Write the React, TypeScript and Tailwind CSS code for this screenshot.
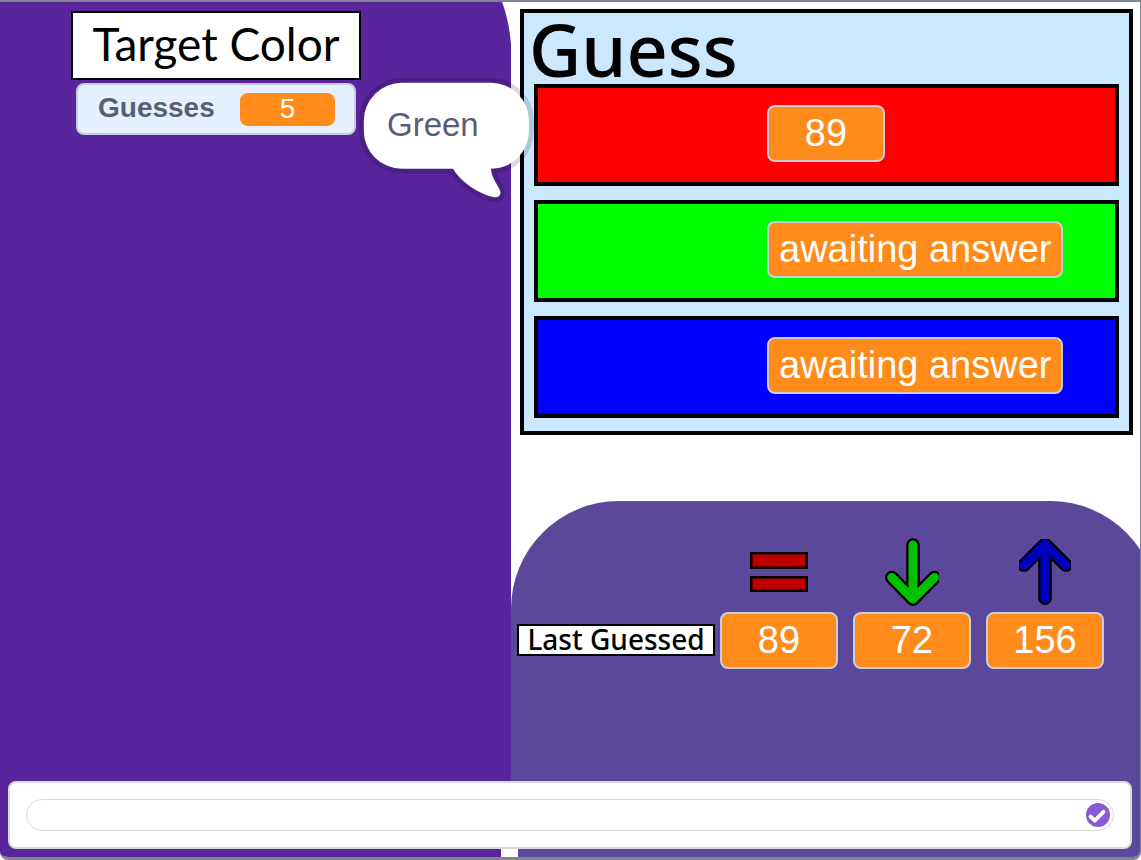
import type { FormEvent, ReactNode } from "react";
import { useState } from "react";

const sans = "font-['Liberation_Sans',Arial,sans-serif]";
const noto = "font-['Noto_Sans','Open_Sans',sans-serif]";

function Value({ children }: { children: ReactNode }) {
  return (
    <output
      className={`${sans} flex h-[57px] w-fit min-w-[118px] items-center justify-center rounded-lg border-2 border-[#c9cddb] bg-[#ff8c1a] px-[10px] pb-[2px] text-[38px] leading-none whitespace-nowrap text-white`}
    >
      {children}
    </output>
  );
}

function Equal() {
  return (
    <svg width="58" height="40" viewBox="0 0 58 40" aria-label="Correct" role="img">
      <g fill="#c00000" stroke="#000" strokeWidth="2.5">
        <rect x="1.25" y="1.25" width="55.5" height="14.5" />
        <rect x="1.25" y="25.25" width="55.5" height="13.5" />
      </g>
    </svg>
  );
}

function ArrowDown() {
  const d = "M28 7V61M6.8 39.5 28 61.2 49.5 39.5";
  return (
    <svg width="54" height="68" viewBox="0 0 54 68" fill="none" strokeLinecap="round" strokeLinejoin="round" aria-label="Lower" role="img">
      <path d={d} stroke="#000" strokeWidth="13.6" />
      <path d={d} stroke="#00c000" strokeWidth="9" />
    </svg>
  );
}

function ArrowUp() {
  const d = "M26 59.3V5.5M5 26.2 26 5.2 47 26.2";
  return (
    <svg width="52" height="66" viewBox="0 0 52 66" fill="none" strokeLinecap="round" strokeLinejoin="round" aria-label="Higher" role="img">
      <path d={d} stroke="#000" strokeWidth="13.6" />
      <path d={d} stroke="#0000c0" strokeWidth="9" />
    </svg>
  );
}

function Bubble() {
  return (
    <div className="absolute top-[76px] left-[359px] z-10 h-[126px] w-[176px]">
      <svg className="absolute inset-0" width="176" height="126" viewBox="-2 -2 74 53" aria-hidden="true">
        <path
          d="M16 36.2A16 16 0 0 1 0 20V16A16 16 0 0 1 16 0H53.5A16 16 0 0 1 69.5 16V20.2A16 16 0 0 1 53.5 36.2C53.5 40.2 57.5 44.2 57.5 46.2A2 2 0 0 1 55.5 48.2C52.5 48.2 42.5 44.2 37.5 36.2Z"
          fill="#fff"
          stroke="#000"
          strokeOpacity="0.15"
          strokeWidth="4"
          paintOrder="stroke"
        />
      </svg>
      <p className={`${sans} relative pt-[29px] pl-7 text-[33px] leading-9 text-[#575e75]`}>Green</p>
    </div>
  );
}

const guesses = [
  { name: "Red", value: "89", color: "bg-[#ff0000]" },
  { name: "Green", value: "awaiting answer", color: "bg-[#00ff00]" },
  { name: "Blue", value: "awaiting answer", color: "bg-[#0000ff]" },
];

const last = [
  { value: "89", icon: <Equal /> },
  { value: "72", icon: <ArrowDown /> },
  { value: "156", icon: <ArrowUp /> },
];

export default function App() {
  const [answer, setAnswer] = useState("");
  const submit = (e: FormEvent) => {
    e.preventDefault();
    setAnswer("");
  };

  return (
    <main className="relative grid min-h-screen grid-cols-[511fr_629fr] overflow-hidden rounded-b-lg border-t-2 border-r border-b-[3px] border-[#7f8497] bg-white">
      <section className="bg-[#59259c]">
        <h1 className="mt-[9px] ml-[71px] flex h-[69px] w-[290px] items-center justify-center border-2 border-black bg-white pb-1 font-['Lato',cursive] text-[46px] leading-none whitespace-nowrap text-black">
          Target Color
        </h1>
        <div className={`${sans} mt-[3px] ml-[76px] flex h-[52px] w-[280px] items-center justify-between rounded-lg border-2 border-[#c2cbdb] bg-[#e6f0ff] pr-[19px] pl-5 text-[28px]`}>
          <span className="pb-[2px] font-bold text-[#575e75]">Guesses</span>
          <output className="h-[33px] w-[95px] rounded-lg bg-[#ff8c1a] text-center leading-8 text-white">5</output>
        </div>
      </section>

      <Bubble />

      <section className="relative flex min-w-0 flex-col">
        <svg className="absolute top-0 -left-[9px]" width="9" height="42" viewBox="0 0 9 42" aria-hidden="true">
          <path d="M0 0Q7 18 9 42V0Z" fill="#fff" />
        </svg>

        <div className="mr-[7px] ml-[9px] mt-[7px] border-4 border-black bg-[#cbe8ff] px-[10px] pb-[13px]">
          <h2 className={`${noto} -ml-[9px] h-[71px] pl-1 text-7xl leading-[72px] font-medium text-black`}>Guess</h2>
          <div className="flex flex-col gap-[14px]">
            {guesses.map((g) => (
              <div key={g.name} aria-label={g.name} className={`${g.color} h-[102px] border-4 border-black pt-[17px] pl-[229px]`}>
                <Value>{g.value}</Value>
              </div>
            ))}
          </div>
        </div>

        <div className="mt-[66px] flex min-h-[354px] flex-1 overflow-hidden">
          <div className="-mr-[18px] flex flex-1 items-start rounded-t-[108px] bg-[#5b489b] pt-[37px] pl-[6px]">
            <h3 className={`${noto} mt-[86px] mr-[5px] h-8 w-[198px] shrink-0 border-2 border-black bg-white text-center text-[28px] leading-[26px] font-medium whitespace-nowrap text-black`}>
              Last Guessed
            </h3>
            <ul className="flex gap-[15px]">
              {last.map((l) => (
                <li key={l.value} className="flex flex-col items-center">
                  <div className="mb-[6px] flex h-[68px] items-center">{l.icon}</div>
                  <Value>{l.value}</Value>
                </li>
              ))}
            </ul>
          </div>
        </div>
        <div className="absolute bottom-0 -left-[10px] h-4 w-[17px] bg-white" />
      </section>

      <form
        onSubmit={submit}
        className="absolute inset-x-2 bottom-2 z-20 rounded-lg border-2 border-[#d9d9d9] bg-white p-4"
      >
        <div className="relative flex">
          <input
            aria-label="Answer"
            value={answer}
            onChange={(e) => setAnswer(e.target.value)}
            className={`${sans} h-8 w-full rounded-full border border-[#d9d9d9] pr-10 pl-4 text-base text-[#575e75] outline-none`}
          />
          <button
            type="submit"
            aria-label="Submit answer"
            className="absolute top-1 right-1 flex size-6 items-center justify-center rounded-full bg-[#855cd6]"
          >
            <svg width="24" height="24" viewBox="0 0 24 24" fill="none" aria-hidden="true">
              <path d="M4.5 13.5 8.8 17.6 17.5 8.8" stroke="#fff" strokeWidth="3.8" strokeLinecap="round" strokeLinejoin="round" />
            </svg>
          </button>
        </div>
      </form>
    </main>
  );
}
